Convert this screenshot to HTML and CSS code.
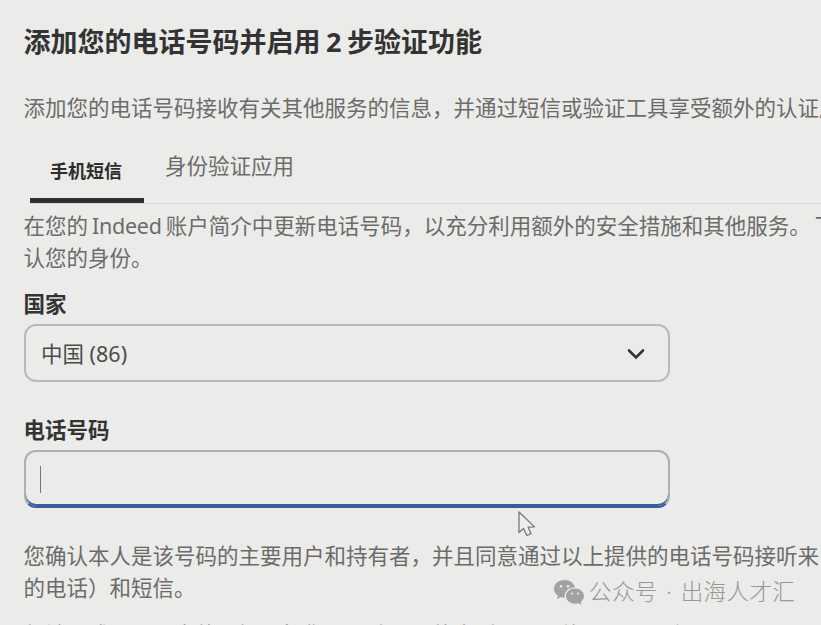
FILE: index.html
```html
<!DOCTYPE html>
<html lang="zh-CN">
<head>
    <meta charset="UTF-8">
    <meta name="viewport" content="width=device-width, initial-scale=1.0">
    <title>添加您的电话号码并启用 2 步验证功能</title>
    <link rel="stylesheet" href="styles.css">
</head>
<body>

<main class="page">
    <h1>添加您的电话号码并启用 2 步验证功能</h1>
    <p class="intro">添加您的电话号码接收有关其他服务的信息，并通过短信或验证工具享受额外的认证层</p>

    <div class="tabs">
        <div class="tab active">手机短信</div>
        <div class="tab">身份验证应用</div>
    </div>

    <p class="info">在您的 <span class="brand">Indeed</span> 账户简介中更新电话号码，以充分利用额外的安全措施和其他服务。 下<br>认您的身份。</p>

    <div class="label">国家</div>
    <div class="field select">
        <span>中国 (86)</span>
        <svg class="chevron" width="18" height="12" viewBox="0 0 18 12">
            <path d="M2 2.5l7 7 7-7" fill="none" stroke="#333" stroke-width="2.6" stroke-linecap="round"/>
        </svg>
    </div>

    <div class="label phone-label">电话号码</div>
    <div class="field phone"><span class="caret"></span></div>

    <p class="consent">您确认本人是该号码的主要用户和持有者，并且同意通过以上提供的电话号码接听来<br>的电话）和短信。</p>
    <p class="note">何被动或取与账户的通知，如您要更改原来的电话号码，能一个月更有</p>
</main>

<svg class="cursor" width="20" height="28" viewBox="0 0 20 28">
    <path d="M2 2v20.500l4.500-4 3.400 7 4.200-1.800-3-6.500 6.400-.3z" fill="#ededeb" stroke="#777" stroke-width="1.300" stroke-linejoin="round"/>
</svg>

<div class="watermark">
    <svg width="32" height="26" viewBox="0 0 32 26">
        <path d="M11.500 1C5.300 1 1 5 1 9.800c0 2.900 1.500 5.200 3.900 6.800L4 20l4-2.100c1.200.4 2.500.5 3.700.5C11 12.500 16 8.300 22 8.600 21 4 17 1 11.500 1z" fill="#a2a2a1"/>
        <path d="M22 9.500c-5 0-9 3.400-9 7.600s4 7.600 9 7.600c1.100 0 2.200-.2 3.200-.5l3.300 1.600-.8-2.900c2.100-1.400 3.300-3.400 3.300-5.800 0-4.200-4-7.600-9-7.600z" fill="#a2a2a1"/>
        <circle cx="8" cy="7.300" r="1.300" fill="#ebebe9"/>
        <circle cx="15" cy="7.300" r="1.300" fill="#ebebe9"/>
        <circle cx="19" cy="14.600" r="1.100" fill="#ebebe9"/>
        <circle cx="25" cy="14.600" r="1.100" fill="#ebebe9"/>
    </svg>
    <span>公众号 · 出海人才汇</span>
</div>

</body>
</html>
```
FILE: styles.css
```css
body {
    margin: 0;
    height: 625px;
    overflow: hidden;
    position: relative;
    background-color: #ebebe9;
    color: #6b6b6a;
    font-family: 'Noto Sans', 'Noto Sans CJK SC', sans-serif;
    font-size: 21.5px;
    line-height: 32px;
}

.page {
    padding: 22px 0 0 23.5px;
    white-space: nowrap;
    overflow: hidden;
}

h1 {
    margin: 0;
    font-size: 27px;
    line-height: 40px;
    font-weight: bold;
    word-spacing: -1.5px;
    color: #333;
}

p {
    margin: 0;
}

.intro {
    margin-top: 30px;
}

.tabs {
    display: flex;
    margin: 20px 0 6px 6.5px;
    height: 59px;
    border-bottom: 1px solid #d8d8d7;
}

.tab {
    padding: 6px 21px 0;
}

.tab.active {
    box-sizing: border-box;
    width: 114px;
    height: 59px;
    padding: 11px 20px 0;
    border-bottom: 5px solid #303030;
    color: #2d2d2d;
    font-size: 18px;
    font-weight: bold;
}

.info {
    word-spacing: -1.5px;
}

.brand {
    letter-spacing: -0.3px;
}

.label {
    margin-top: 14px;
    color: #333;
    font-weight: bold;
}

.field {
    box-sizing: border-box;
    width: 646px;
    height: 58px;
    margin: 4px 0 0 0.5px;
    padding: 0 15px;
    border: 2px solid #b9b9b8;
    border-radius: 12px;
    display: flex;
    align-items: center;
}

.select {
    justify-content: space-between;
    padding-right: 23px;
    color: #4b4b4a;
}

.select span,
.chevron {
    margin-top: 2px;
}

.phone-label {
    margin-top: 32px;
}

.phone {
    border-color: #a9b0b6;
    border-bottom-color: #3b5c9b;
    box-shadow: inset 0 -2px #3b5c9b;
}

.caret {
    width: 1px;
    height: 27px;
    margin-left: -1px;
    background-color: #777;
}

.consent {
    margin-top: 32px;
}

.note {
    margin-top: 15px;
}

.cursor {
    position: absolute;
    left: 517px;
    top: 510px;
}

.watermark {
    position: absolute;
    left: 553px;
    top: 576px;
    display: flex;
    align-items: center;
    gap: 4px;
    color: #979796;
    font-size: 22.5px;
    font-weight: 300;
    letter-spacing: 0.4px;
    word-spacing: 2.3px;
    white-space: nowrap;
}
```
